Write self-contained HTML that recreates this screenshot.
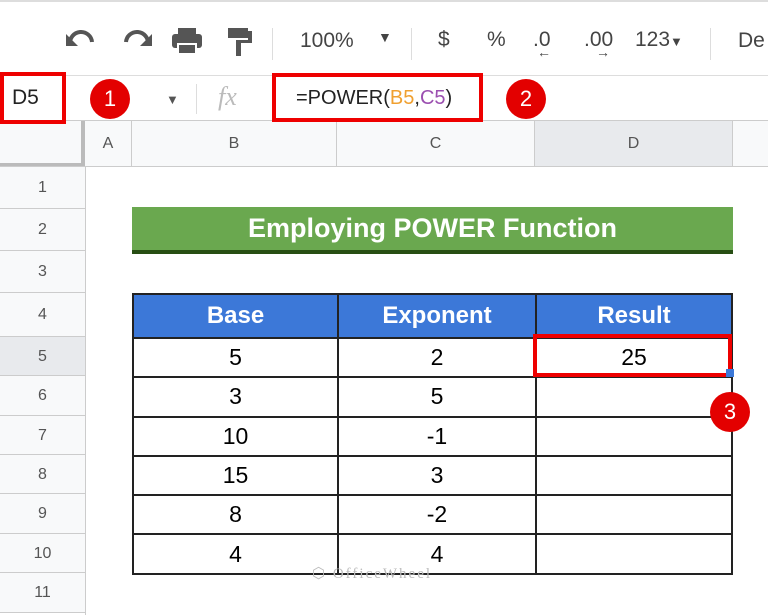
<!DOCTYPE html>
<html><head><style>
body{margin:0;width:768px;height:615px;overflow:hidden;background:#fff;font-family:"Liberation Sans",sans-serif;position:relative}
.a{position:absolute}
.t{position:absolute;color:#444;font-size:21px}
.rh{position:absolute;left:0;width:85px;text-align:center;color:#555;font-size:16px;border-bottom:1px solid #ccc;background:#f8f9fa;box-sizing:border-box}
.ch{position:absolute;top:121px;height:46px;line-height:46px;text-align:center;color:#555;font-size:16px;border-right:1px solid #ccc;box-sizing:border-box;background:#f8f9fa}
table{position:absolute;left:132px;top:293px;border-collapse:collapse;width:601px;table-layout:fixed}
td{border:2px solid #222;text-align:center;font-size:23px;padding:0;height:37.3px}
th{background:#3c78d8;color:#fff;font-size:24px;border:2px solid #222;height:40px}
.c{position:absolute;width:40px;height:40px;border-radius:50%;background:#e30000;color:#fff;font-size:22px;text-align:center;line-height:40px}
.rb{position:absolute;border:4px solid #e00;box-sizing:border-box}
</style></head><body>
<div class="a" style="left:0;top:0;width:768px;height:2px;background:#ddd"></div>
<svg class="a" style="left:62px;top:22px" width="300" height="36" viewBox="0 0 300 36">
<path d="M8 22 a9 9 0 0 1 22 -2" stroke="#555" stroke-width="4" fill="none"/><path d="M4 12 l0 12 12 0z" fill="#555"/>
<path d="M86 22 a9 9 0 0 0 -22 -2" stroke="#555" stroke-width="4" fill="none"/><path d="M90 12 l0 12 -12 0z" fill="#555"/>
<rect x="110" y="12" width="30" height="14" rx="3" fill="#555"/><rect x="116" y="6" width="18" height="6" fill="#555"/><rect x="116" y="22" width="18" height="10" fill="#555" stroke="#fff" stroke-width="2"/>
<rect x="166" y="6" width="20" height="10" fill="#555"/><rect x="186" y="9" width="4" height="10" fill="#555"/><rect x="174" y="18" width="16" height="3" fill="#555"/><rect x="174" y="18" width="5" height="16" fill="#555"/>
</svg>
<div class="a" style="left:272px;top:28px;width:1px;height:32px;background:#ddd"></div>
<div class="t" style="left:300px;top:29px">100%</div>
<div class="t" style="left:378px;top:29px;font-size:14px">▼</div>
<div class="a" style="left:411px;top:28px;width:1px;height:32px;background:#ddd"></div>
<div class="t" style="left:438px;top:28px">$</div>
<div class="t" style="left:487px;top:28px">%</div>
<div class="t" style="left:533px;top:28px">.0<span style="font-size:14px;position:absolute;left:4px;top:16px">←</span></div>
<div class="t" style="left:584px;top:28px">.00<span style="font-size:14px;position:absolute;left:12px;top:16px">→</span></div>
<div class="t" style="left:635px;top:28px">123<span style="font-size:13px">▼</span></div>
<div class="a" style="left:710px;top:28px;width:1px;height:32px;background:#ddd"></div>
<div class="t" style="left:738px;top:29px">De</div>
<div class="a" style="left:0;top:75px;width:768px;height:1px;background:#ddd"></div>
<div class="t" style="left:12px;top:86px;color:#222">D5</div>
<div class="t" style="left:166px;top:92px;font-size:13px;color:#555">▼</div>
<div class="a" style="left:196px;top:84px;width:1px;height:30px;background:#ddd"></div>
<div class="t" style="left:218px;top:82px;font-family:'Liberation Serif',serif;font-style:italic;color:#bbb;font-size:26px">fx</div>
<div class="t" style="left:296px;top:87px;color:#222;font-size:20px">=POWER(<span style="color:#f0a030">B5</span>,<span style="color:#9b4fb0">C5</span>)</div>
<div class="a" style="left:0;top:120px;width:768px;height:1px;background:#ccc"></div>
<div class="a" style="left:0;top:121px;width:85px;height:46px;background:#f8f9fa;border-right:4px solid #bbb;border-bottom:4px solid #bbb;box-sizing:border-box"></div>
<div class="ch" style="left:85px;width:47px">A</div>
<div class="ch" style="left:132px;width:205px">B</div>
<div class="ch" style="left:337px;width:198px">C</div>
<div class="ch" style="left:535px;width:198px;background:#e8eaed">D</div>
<div class="ch" style="left:733px;width:40px"></div>
<div class="a" style="left:0;top:166px;width:768px;height:1px;background:#ccc"></div>
<div class="a" style="left:85px;top:167px;width:1px;height:448px;background:#ccc"></div>
<div class="rh" style="top:167px;height:42px;line-height:42px">1</div>
<div class="rh" style="top:209px;height:42px;line-height:42px">2</div>
<div class="rh" style="top:251px;height:42px;line-height:42px">3</div>
<div class="rh" style="top:293px;height:44px;line-height:44px">4</div>
<div class="rh" style="top:337px;height:39px;line-height:39px;background:#e8eaed">5</div>
<div class="rh" style="top:376px;height:40px;line-height:40px">6</div>
<div class="rh" style="top:416px;height:39px;line-height:39px">7</div>
<div class="rh" style="top:455px;height:39px;line-height:39px">8</div>
<div class="rh" style="top:494px;height:40px;line-height:40px">9</div>
<div class="rh" style="top:534px;height:39px;line-height:39px">10</div>
<div class="rh" style="top:573px;height:40px;line-height:40px">11</div>
<div class="a" style="left:132px;top:207px;width:601px;height:43px;background:#6aa84f;border-bottom:4px solid #274e13;color:#fff;font-weight:bold;font-size:27px;text-align:center;line-height:43px">Employing POWER Function</div>
<table>
<colgroup><col style="width:205px"><col style="width:198px"><col></colgroup>
<tr><th>Base</th><th>Exponent</th><th>Result</th></tr>
<tr><td>5</td><td>2</td><td>25</td></tr>
<tr><td>3</td><td>5</td><td></td></tr>
<tr><td>10</td><td>-1</td><td></td></tr>
<tr><td>15</td><td>3</td><td></td></tr>
<tr><td>8</td><td>-2</td><td></td></tr>
<tr><td>4</td><td>4</td><td></td></tr>
</table>
<div class="a" style="left:312px;top:564px;color:#bbb;font-family:'Liberation Serif',serif;font-size:15px;letter-spacing:2px">⬡ OfficeWheel</div>
<div class="rb" style="left:0;top:72px;width:66px;height:52px"></div>
<div class="rb" style="left:272px;top:73px;width:211px;height:49px"></div>
<div class="rb" style="left:533px;top:334px;width:199px;height:43px"></div>
<div class="a" style="left:726px;top:369px;width:8px;height:8px;background:#3c78d8"></div>
<div class="c" style="left:90px;top:79px">1</div>
<div class="c" style="left:506px;top:79px">2</div>
<div class="c" style="left:710px;top:392px">3</div>
</body></html>
